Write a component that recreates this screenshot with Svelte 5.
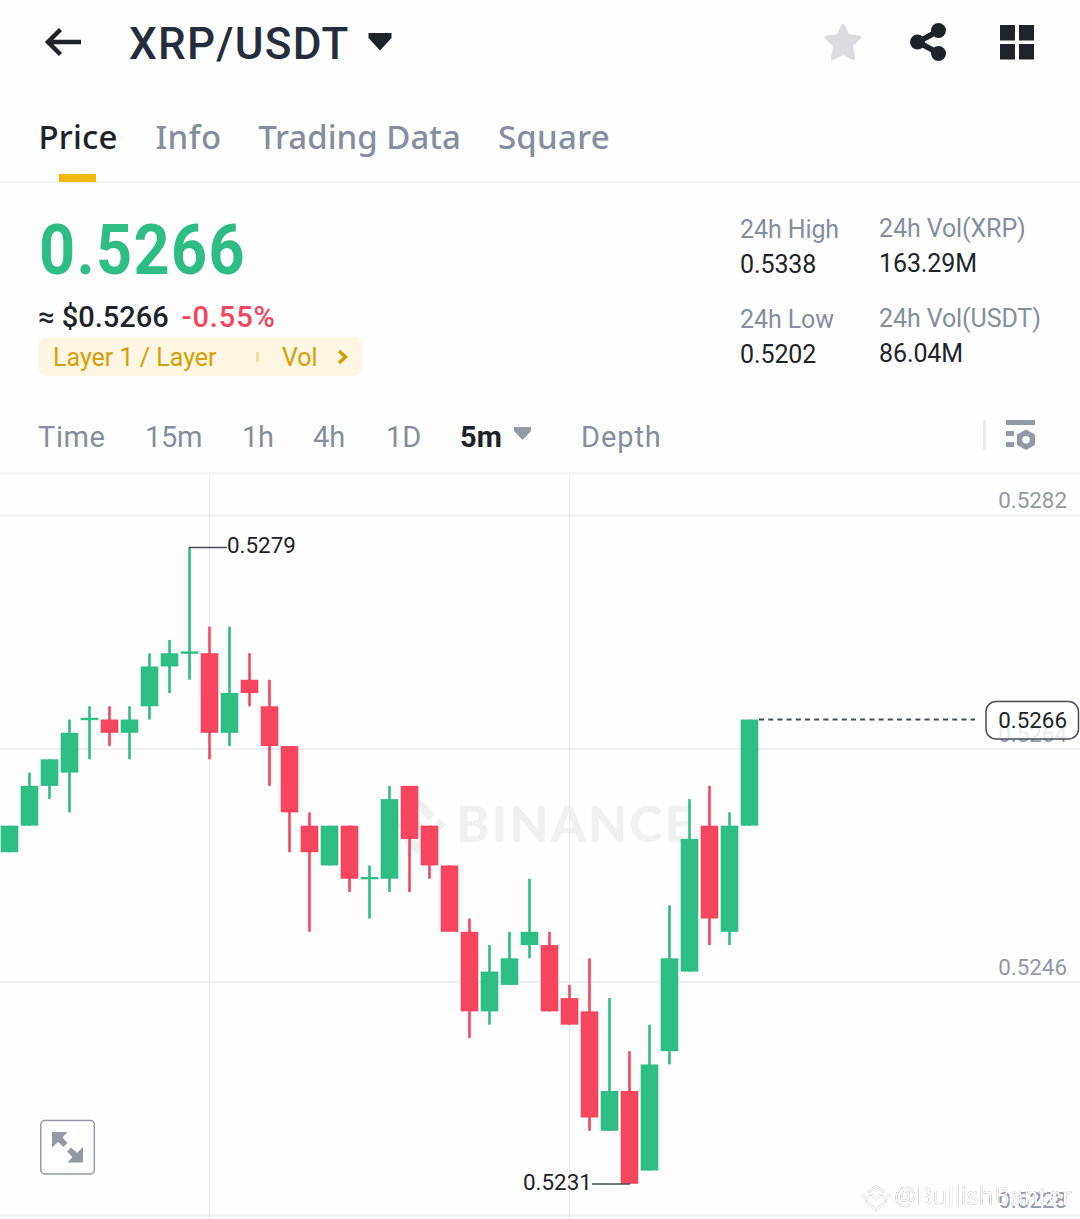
<script>
  const tabs = [
    { label: "Price", id: "price" },
    { label: "Info", id: "info" },
    { label: "Trading Data", id: "data" },
    { label: "Square", id: "square" }
  ];
  let activeTab = "price";

  const stats = [
    { label: "24h High", value: "0.5338" },
    { label: "24h Vol(XRP)", value: "163.29M" },
    { label: "24h Low", value: "0.5202" },
    { label: "24h Vol(USDT)", value: "86.04M" }
  ];

  const intervals = [
    { label: "Time", id: "time" },
    { label: "15m", id: "m15" },
    { label: "1h", id: "h1" },
    { label: "4h", id: "h4" },
    { label: "1D", id: "d1" },
    { label: "5m", id: "m5", menu: true },
    { label: "Depth", id: "depth" }
  ];
  let activeInterval = "m5";

  // open, high, low, close in ticks of 0.0001 above 0.5200
  const candles = [
    [56, 58, 56, 58],
    [58, 62, 58, 61],
    [61, 63, 60, 63],
    [62, 66, 59, 65],
    [66, 67, 63, 66],
    [66, 67, 64, 65],
    [65, 67, 63, 66],
    [67, 71, 66, 70],
    [70, 72, 68, 71],
    [71, 79, 69, 71],
    [71, 73, 63, 65],
    [65, 73, 64, 68],
    [69, 71, 67, 68],
    [67, 69, 61, 64],
    [64, 64, 56, 59],
    [58, 59, 50, 56],
    [55, 58, 55, 58],
    [58, 58, 53, 54],
    [54, 55, 51, 54],
    [54, 61, 53, 60],
    [61, 61, 53, 57],
    [58, 58, 54, 55],
    [55, 55, 50, 50],
    [50, 51, 42, 44],
    [44, 49, 43, 47],
    [46, 50, 46, 48],
    [49, 54, 48, 50],
    [49, 50, 44, 44],
    [45, 46, 43, 43],
    [44, 48, 35, 36],
    [35, 45, 35, 38],
    [38, 41, 31, 31],
    [32, 43, 32, 40],
    [41, 52, 40, 48],
    [47, 60, 47, 57],
    [58, 61, 49, 51],
    [50, 59, 49, 58],
    [58, 66, 58, 66]
  ];

  const axis = [
    { y: 42.5, label: "0.5282" },
    { y: 276, label: "0.5264" },
    { y: 509, label: "0.5246" },
    { y: 742.5, label: "0.5228" }
  ];

  const toY = tick => 74.1 + (79 - tick) * 13.265;

  const bars = candles.map(([open, high, low, close], i) => {
    const doji = open === close;
    const top = toY(Math.max(open, close));
    return {
      x: i * 20 + 9.5,
      high: toY(high),
      low: toY(low),
      top: doji ? top - 1.8 : top,
      height: doji ? 2.4 : toY(Math.min(open, close)) - top,
      color: close >= open ? "#2ebd85" : "#f6465d"
    };
  });
</script>

<style>
  :global(body) {
    background: #fefefe;
  }
  .screen {
    width: 1080px;
    height: 1219px;
    overflow: hidden;
    display: flex;
    flex-direction: column;
    background: #fefefe;
    color: #1e2329;
    font-family: Roboto, "Liberation Sans", sans-serif;
    white-space: nowrap;
  }
  svg {
    display: block;
    flex: none;
  }
  button {
    padding: 0;
    border: none;
    background: none;
    color: inherit;
    font: inherit;
    letter-spacing: inherit;
    text-align: left;
  }
  header {
    box-sizing: border-box;
    height: 92px;
    padding: 0 45px 8px 43px;
    display: flex;
    align-items: center;
  }
  h1 {
    margin: 4px 0 0;
    width: 239px;
    padding-left: 47px;
    color: #252d3d;
    font-size: 44px;
    line-height: 60px;
    font-weight: 500;
    letter-spacing: 1.25px;
  }
  .actions {
    margin-left: auto;
    display: flex;
    align-items: center;
  }
  .share {
    margin: 0 53px 0 48px;
  }
  .tabs {
    box-sizing: border-box;
    height: 91px;
    padding-left: 39px;
    display: flex;
    border-bottom: 2px solid #f4f4f5;
    color: #848e9c;
    font-family: "Noto Sans", sans-serif;
    font-size: 33px;
    font-weight: 500;
  }
  .tab {
    box-sizing: border-box;
    height: 90px;
    display: flex;
    flex-direction: column;
    align-items: center;
    justify-content: space-between;
    padding-top: 22px;
    line-height: 46px;
  }
  .tab.price {
    width: 78px;
    margin-right: 38px;
    letter-spacing: 0.2px;
  }
  .tab.info {
    width: 67px;
    margin-right: 37px;
    letter-spacing: 0.4px;
  }
  .tab.data {
    width: 201px;
    margin-right: 38px;
  }
  .tab.square {
    width: 112px;
    letter-spacing: 0.3px;
  }
  .tab.active {
    color: #1e2329;
  }
  .marker {
    width: 37px;
    height: 8px;
    margin-right: 1px;
    background: #f0b90b;
  }
  .summary {
    box-sizing: border-box;
    height: 219px;
    padding: 29px 30px 0 38px;
    display: flex;
    justify-content: space-between;
  }
  .last {
    color: #2ebd85;
    font-size: 70px;
    line-height: 76px;
    font-weight: 700;
    letter-spacing: 1.5px;
    transform: translateX(1px) scaleX(0.9);
    transform-origin: left;
  }
  .fiat {
    margin-top: 11px;
    display: flex;
    gap: 13px;
    font-size: 29px;
    line-height: 36px;
    font-weight: 500;
  }
  .down {
    color: #f6465d;
    letter-spacing: 0.9px;
  }
  .tags {
    box-sizing: border-box;
    width: 325px;
    height: 39px;
    margin-top: 2px;
    padding: 1px 14px 0 15px;
    display: flex;
    align-items: center;
    border-radius: 9px;
    background: #fdf6e3;
    color: #d5a006;
    font-size: 25px;
  }
  .layer {
    width: 203px;
  }
  .split {
    width: 3px;
    height: 10px;
    margin-right: 23px;
    background: #f4dfa3;
  }
  .arrow {
    margin-left: auto;
  }
  .stats {
    display: grid;
    align-content: start;
    grid-template-columns: 139px 171px;
    row-gap: 20px;
  }
  .stat {
    display: flex;
    flex-direction: column;
    font-size: 25px;
    line-height: 35px;
    letter-spacing: -0.1px;
  }
  .stat:nth-child(even) {
    margin-top: -1px;
  }
  .label {
    color: #848e9c;
  }
  .intervals {
    box-sizing: border-box;
    height: 73px;
    padding: 0 44px 1px 38px;
    border-bottom: 3px solid #f5f5f6;
    display: flex;
    align-items: center;
    color: #848e9c;
    font-size: 29px;
  }
  .time {
    width: 107px;
    letter-spacing: 0.6px;
  }
  .m15 {
    width: 97px;
    letter-spacing: -0.3px;
  }
  .h1 {
    width: 71px;
    letter-spacing: -0.4px;
  }
  .h4 {
    width: 73px;
  }
  .d1 {
    width: 74px;
  }
  .m5 {
    width: 121px;
    display: flex;
    align-items: center;
    gap: 12px;
  }
  .m5 svg {
    margin-bottom: 5px;
  }
  .depth {
    letter-spacing: 0.9px;
  }
  .selected {
    color: #1e2329;
    font-weight: 700;
  }
  .tools {
    margin-left: auto;
    margin-bottom: 3px;
    display: flex;
    align-items: center;
  }
  .rule {
    width: 3px;
    height: 30px;
    margin-right: 20px;
    background: #eaecef;
  }
  .chart text {
    font-size: 22.4px;
    fill: #1e2329;
  }
  .chart .scale {
    fill: #929aa5;
  }
  .chart .brand {
    font-family: Lato, sans-serif;
    font-weight: 900;
    font-size: 48.5px;
    fill: #eff1f1;
  }
  .chart .author {
    font-family: "Noto Sans", sans-serif;
    font-size: 25px;
    fill: #fff;
  }
  .watermark {
    filter: drop-shadow(0.8px 0.9px 0.4px rgba(0, 0, 0, 0.6));
  }
</style>

<div class="screen">
  <header>
    <svg width="39" height="32" viewBox="0 0 39 32" fill="none" stroke="#1e2329" stroke-width="4.5">
      <path d="M38 16H5M17.500 3.500 5 16l12.500 12.500" />
    </svg>
    <h1>XRP/USDT</h1>
    <svg width="24" height="20" viewBox="0 0 24 20">
      <path d="M.5 1h23v5L12 18.500 .5 6z" fill="#1e2329" />
    </svg>
    <div class="actions">
      <svg width="38" height="38" viewBox="0 0 38 38">
        <path
          d="m19 2 5 10.600 12 1.700-8.500 8.400 2 12.900L19 30.500 8.500 35.600l2-12.900L2 14.300l12-1.700z"
          fill="#d8dce1"
          stroke="#d8dce1"
          stroke-width="3"
          stroke-linejoin="round" />
      </svg>
      <svg class="share" width="37" height="38" viewBox="0 0 37 38" fill="#1e2329">
        <path d="m29 7.500-21 11.500 21 11.500" fill="none" stroke="#1e2329" stroke-width="5.500" />
        <circle cx="7.500" cy="19" r="7.500" />
        <circle cx="28.500" cy="7.500" r="7.500" />
        <circle cx="28.500" cy="30.500" r="7.500" />
      </svg>
      <svg width="35" height="35" viewBox="0 0 35 35">
        <path d="M0 0h15v15.500H0zM19 0h15v15.500H19zM0 19h15v15.500H0zM19 19h15v15.500H19z" fill="#1e2329" />
      </svg>
    </div>
  </header>

  <nav class="tabs">
    {#each tabs as tab}
      <button
        class="tab {tab.id}"
        class:active={tab.id === activeTab}
        on:click={() => (activeTab = tab.id)}>
        {tab.label}
        {#if tab.id === activeTab}
          <span class="marker"></span>
        {/if}
      </button>
    {/each}
  </nav>

  <section class="summary">
    <div>
      <div class="last">0.5266</div>
      <div class="fiat">
        <span>≈ $0.5266</span>
        <span class="down">-0.55%</span>
      </div>
      <div class="tags">
        <span class="layer">Layer 1 / Layer</span>
        <span class="split"></span>
        <span>Vol</span>
        <svg class="arrow" width="12" height="16" viewBox="0 0 12 16" fill="none" stroke="#d5a006" stroke-width="3.5">
          <path d="m2 2 6.500 6L2 14" />
        </svg>
      </div>
    </div>
    <div class="stats">
      {#each stats as stat}
        <div class="stat">
          <span class="label">{stat.label}</span>
          <span>{stat.value}</span>
        </div>
      {/each}
    </div>
  </section>

  <nav class="intervals">
    {#each intervals as item}
      <button
        class={item.id}
        class:selected={item.id === activeInterval}
        on:click={() => (activeInterval = item.id)}>
        <span>{item.label}</span>
        {#if item.menu}
          <svg width="17" height="14" viewBox="0 0 17 14">
            <path d="M0 0h17v4L8.500 13 0 4z" fill="#929aa5" />
          </svg>
        {/if}
      </button>
    {/each}
    <div class="tools">
      <span class="rule"></span>
      <svg width="30" height="31" viewBox="0 0 30 31" fill="#929aa5">
        <path d="M0 0h29v5H0zM0 11h8v5H0zM0 22h8v5H0z" />
        <path
          fill-rule="evenodd"
          d="m20 9.500 9 5v10.500l-9 5-9-5V14.500zM20 16a3.800 3.800 0 1 0 0 7.600 3.800 3.800 0 0 0 0-7.600z" />
      </svg>
    </div>
  </nav>

  <svg class="chart" width="1080" height="744" viewBox="0 2 1080 744">
    <g fill="#eff1f1" transform="translate(388 323) scale(0.46)">
      <path d="m38.700 53.200 24.600-24.600 24.600 24.600 14.300-14.300L63.300 0 24.400 38.900z" />
      <path d="m0 63.300 14.300-14.300 14.300 14.300-14.300 14.300z" />
      <path d="m38.700 73.400 24.600 24.600 24.600-24.600 14.300 14.300-38.900 38.900-38.900-38.900z" />
      <path d="m98 63.300 14.300-14.300 14.300 14.300-14.300 14.300z" />
      <path d="m48.800 63.300 14.500-14.500 14.500 14.500-14.500 14.500z" />
    </g>
    <text
      class="brand"
      x="456"
      y="369"
      letter-spacing="2"
      textLength="240"
      lengthAdjust="spacingAndGlyphs">BINANCE</text>

    {#each axis as row}
      <path d="M0 {row.y}H1080" stroke="#f0f0f2" stroke-width="2" />
      <text class="scale" x="1067" y={row.y - 7.5} text-anchor="end">{row.label}</text>
    {/each}
    <path d="M209.500 2V746M569.500 2V746" stroke="#e9e9eb" />

    {#each bars as bar}
      <path d="M{bar.x} {bar.high}V{bar.low}" stroke={bar.color} stroke-width="2.600" />
      <rect x={bar.x - 8.8} y={bar.top} width="17.600" height={bar.height} fill={bar.color} />
    {/each}

    <path d="M189 74.500H227M592 711H630" stroke="#474d57" stroke-width="1.500" />
    <text x="227" y="80.400">0.5279</text>
    <text x="523" y="717.400">0.5231</text>

    <path d="M759 246.500H975" stroke="#474d57" stroke-width="1.800" stroke-dasharray="5 4.200" />
    <rect
      x="986"
      y="228.500"
      width="92.500"
      height="37.500"
      rx="10"
      fill="#fff"
      fill-opacity="0.8"
      stroke="#474d57"
      stroke-width="1.500" />
    <text x="1067" y="255.400" text-anchor="end">0.5266</text>

    <rect x="40.800" y="647.500" width="53.500" height="53.500" rx="4" fill="#fff" stroke="#929aa5" stroke-width="1.500" />
    <path
      d="M52 659H67.500L62.500 664.500 67.500 670 63.500 674 58 669 52 674.500zM83 689.500H67.500L72.500 684 67 678.500 71 674.500 77 680 83 674z"
      fill="#929aa5" />

    <g class="watermark">
      <path
        d="m868 719 8-6 8 6M862 722l4 4 4-4M872 722l4 4 4-4M882 722l4 4 4-4M866 728l10 9 10-9"
        fill="none"
        stroke="#fff"
        stroke-width="2" />
      <text class="author" x="894" y="732" textLength="178">@BullishBanter</text>
    </g>
  </svg>
</div>
